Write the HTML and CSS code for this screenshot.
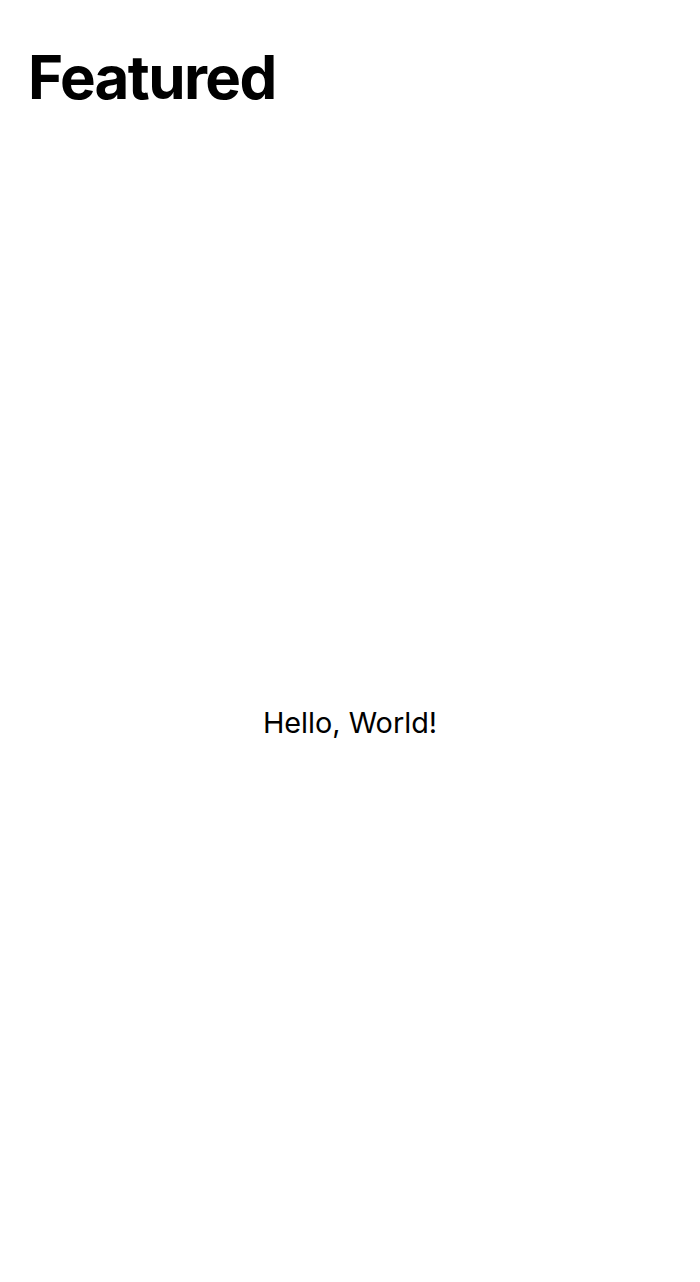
FILE: index.html
```html
<!DOCTYPE html>
<html>
<head>
<meta charset="utf-8">
<link rel="stylesheet" href="styles.css">
</head>
<body>
<div class="screen">
  <header class="nav">
    <h1 class="title">Featured</h1>
  </header>
  <main class="content">
    <p class="greeting">Hello, World!</p>
  </main>
</div>
</body>
</html>
```
FILE: styles.css
```css
html, body {
  margin: 0;
  padding: 0;
  background: #ffffff;
}
.screen {
  width: 700px;
  height: 1282px;
  position: relative;
  font-family: Inter, "Liberation Sans", sans-serif;
  color: #000;
}
.nav {
  padding: 43px 28px 0 28px;
}
.title {
  margin: 0;
  font-size: 60px;
  font-weight: 700;
  line-height: 68px;
  letter-spacing: -1.6px;
}
.content {
  position: absolute;
  inset: 0;
  display: flex;
  align-items: center;
  justify-content: center;
  padding-top: 164px;
}
.greeting {
  margin: 0;
  font-size: 28.8px;
  font-weight: 400;
  line-height: 34px;
}
```
